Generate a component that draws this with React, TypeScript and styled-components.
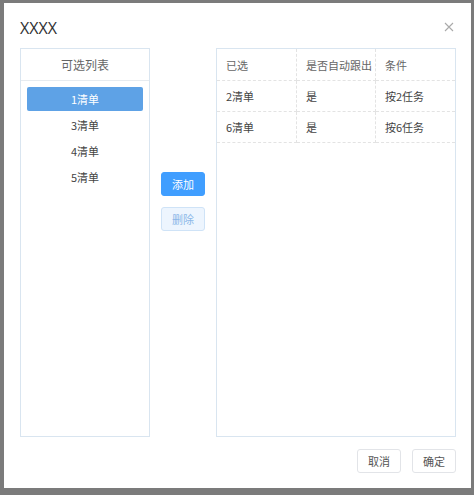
import React from "react";
import styled, { createGlobalStyle } from "styled-components";

const Global = createGlobalStyle`
  html, body { margin: 0; padding: 0; }
  body {
    background: #7b7b7b;
    font-family: "Noto Sans CJK SC", "Noto Sans", sans-serif;
  }
`;

const Overlay = styled.div`
  width: 474px;
  height: 495px;
  box-sizing: border-box;
  padding: 3px 3px 7px 4px;
  background: #7b7b7b;
`;

const Dialog = styled.div`
  width: 100%;
  height: 100%;
  background: #fff;
  box-sizing: border-box;
  display: flex;
  flex-direction: column;
  padding: 0 15px 15px 16px;
`;

const Header = styled.div`
  height: 45px;
  display: flex;
  align-items: center;
  justify-content: space-between;
`;

const Title = styled.div`
  font-family: "Open Sans", "Noto Sans", sans-serif;
  font-size: 16px;
  color: #303133;
  margin-top: 4px;
`;

const Close = styled.div`
  width: 14px;
  height: 14px;
  margin-top: 2px;
  display: flex;
`;

const Body = styled.div`
  display: flex;
  height: 389px;
`;

const LeftPanel = styled.div`
  width: 130px;
  box-sizing: border-box;
  border: 1px solid #d9e5f0;
  display: flex;
  flex-direction: column;
`;

const PanelHead = styled.div`
  height: 31px;
  border-bottom: 1px solid #e6ebf0;
  display: flex;
  align-items: center;
  justify-content: center;
  font-size: 12px;
  color: #666;
`;

const List = styled.div`
  padding: 6px 6px;
  display: flex;
  flex-direction: column;
  gap: 2px;
`;

const Item = styled.div<{ $active?: boolean }>`
  height: 24px;
  display: flex;
  align-items: center;
  justify-content: center;
  font-size: 11px;
  color: ${(p) => (p.$active ? "#fff" : "#444")};
  background: ${(p) => (p.$active ? "#5ea2e6" : "transparent")};
  border-radius: 2px;
`;

const Middle = styled.div`
  width: 66px;
  display: flex;
  flex-direction: column;
  align-items: center;
  padding-top: 124px;
  gap: 11px;
  box-sizing: border-box;
`;

const SmallBtn = styled.div<{ $primary?: boolean }>`
  width: 44px;
  height: 24px;
  box-sizing: border-box;
  border-radius: 3px;
  display: flex;
  align-items: center;
  justify-content: center;
  font-size: 11px;
  background: ${(p) => (p.$primary ? "#409eff" : "#edf5fe")};
  color: ${(p) => (p.$primary ? "#fff" : "#8cb8e8")};
  border: 1px solid ${(p) => (p.$primary ? "#409eff" : "#cfe3f7")};
`;

const RightPanel = styled.div`
  width: 240px;
  box-sizing: border-box;
  border: 1px solid #d9e5f0;
`;

const Table = styled.div`
  display: grid;
  grid-template-columns: 80px 79px 1fr;
`;

const Cell = styled.div<{ $head?: boolean; $last?: boolean }>`
  height: ${(p) => (p.$head ? "31px" : "30px")};
  display: flex;
  align-items: center;
  padding-left: 9px;
  font-size: 11px;
  color: ${(p) => (p.$head ? "#666" : "#444")};
  border-bottom: 1px dashed #e3e3e3;
  border-right: ${(p) => (p.$last ? "none" : "1px dashed #e3e3e3")};
`;

const Footer = styled.div`
  margin-top: auto;
  display: flex;
  justify-content: flex-end;
  gap: 11px;
`;

const FootBtn = styled.div`
  width: 44px;
  height: 24px;
  box-sizing: border-box;
  border: 1px solid #e2e4e8;
  border-radius: 3px;
  display: flex;
  align-items: center;
  justify-content: center;
  font-size: 11px;
  color: #555;
  background: #fff;
`;

const rows = [
  ["2清单", "是", "按2任务"],
  ["6清单", "是", "按6任务"],
];

export default function App() {
  return (
    <>
      <Global />
      <Overlay>
        <Dialog>
          <Header>
            <Title>XXXX</Title>
            <Close>
              <svg width="14" height="14" viewBox="0 0 14 14">
                <path d="M3 3 L11 11 M11 3 L3 11" stroke="#aaa" strokeWidth="1.1" />
              </svg>
            </Close>
          </Header>
          <Body>
            <LeftPanel>
              <PanelHead>可选列表</PanelHead>
              <List>
                <Item $active>1清单</Item>
                <Item>3清单</Item>
                <Item>4清单</Item>
                <Item>5清单</Item>
              </List>
            </LeftPanel>
            <Middle>
              <SmallBtn $primary>添加</SmallBtn>
              <SmallBtn>删除</SmallBtn>
            </Middle>
            <RightPanel>
              <Table>
                <Cell $head>已选</Cell>
                <Cell $head>是否自动跟出</Cell>
                <Cell $head $last>条件</Cell>
                {rows.map((r, i) => (
                  <React.Fragment key={i}>
                    <Cell>{r[0]}</Cell>
                    <Cell>{r[1]}</Cell>
                    <Cell $last>{r[2]}</Cell>
                  </React.Fragment>
                ))}
              </Table>
            </RightPanel>
          </Body>
          <Footer>
            <FootBtn>取消</FootBtn>
            <FootBtn>确定</FootBtn>
          </Footer>
        </Dialog>
      </Overlay>
    </>
  );
}
